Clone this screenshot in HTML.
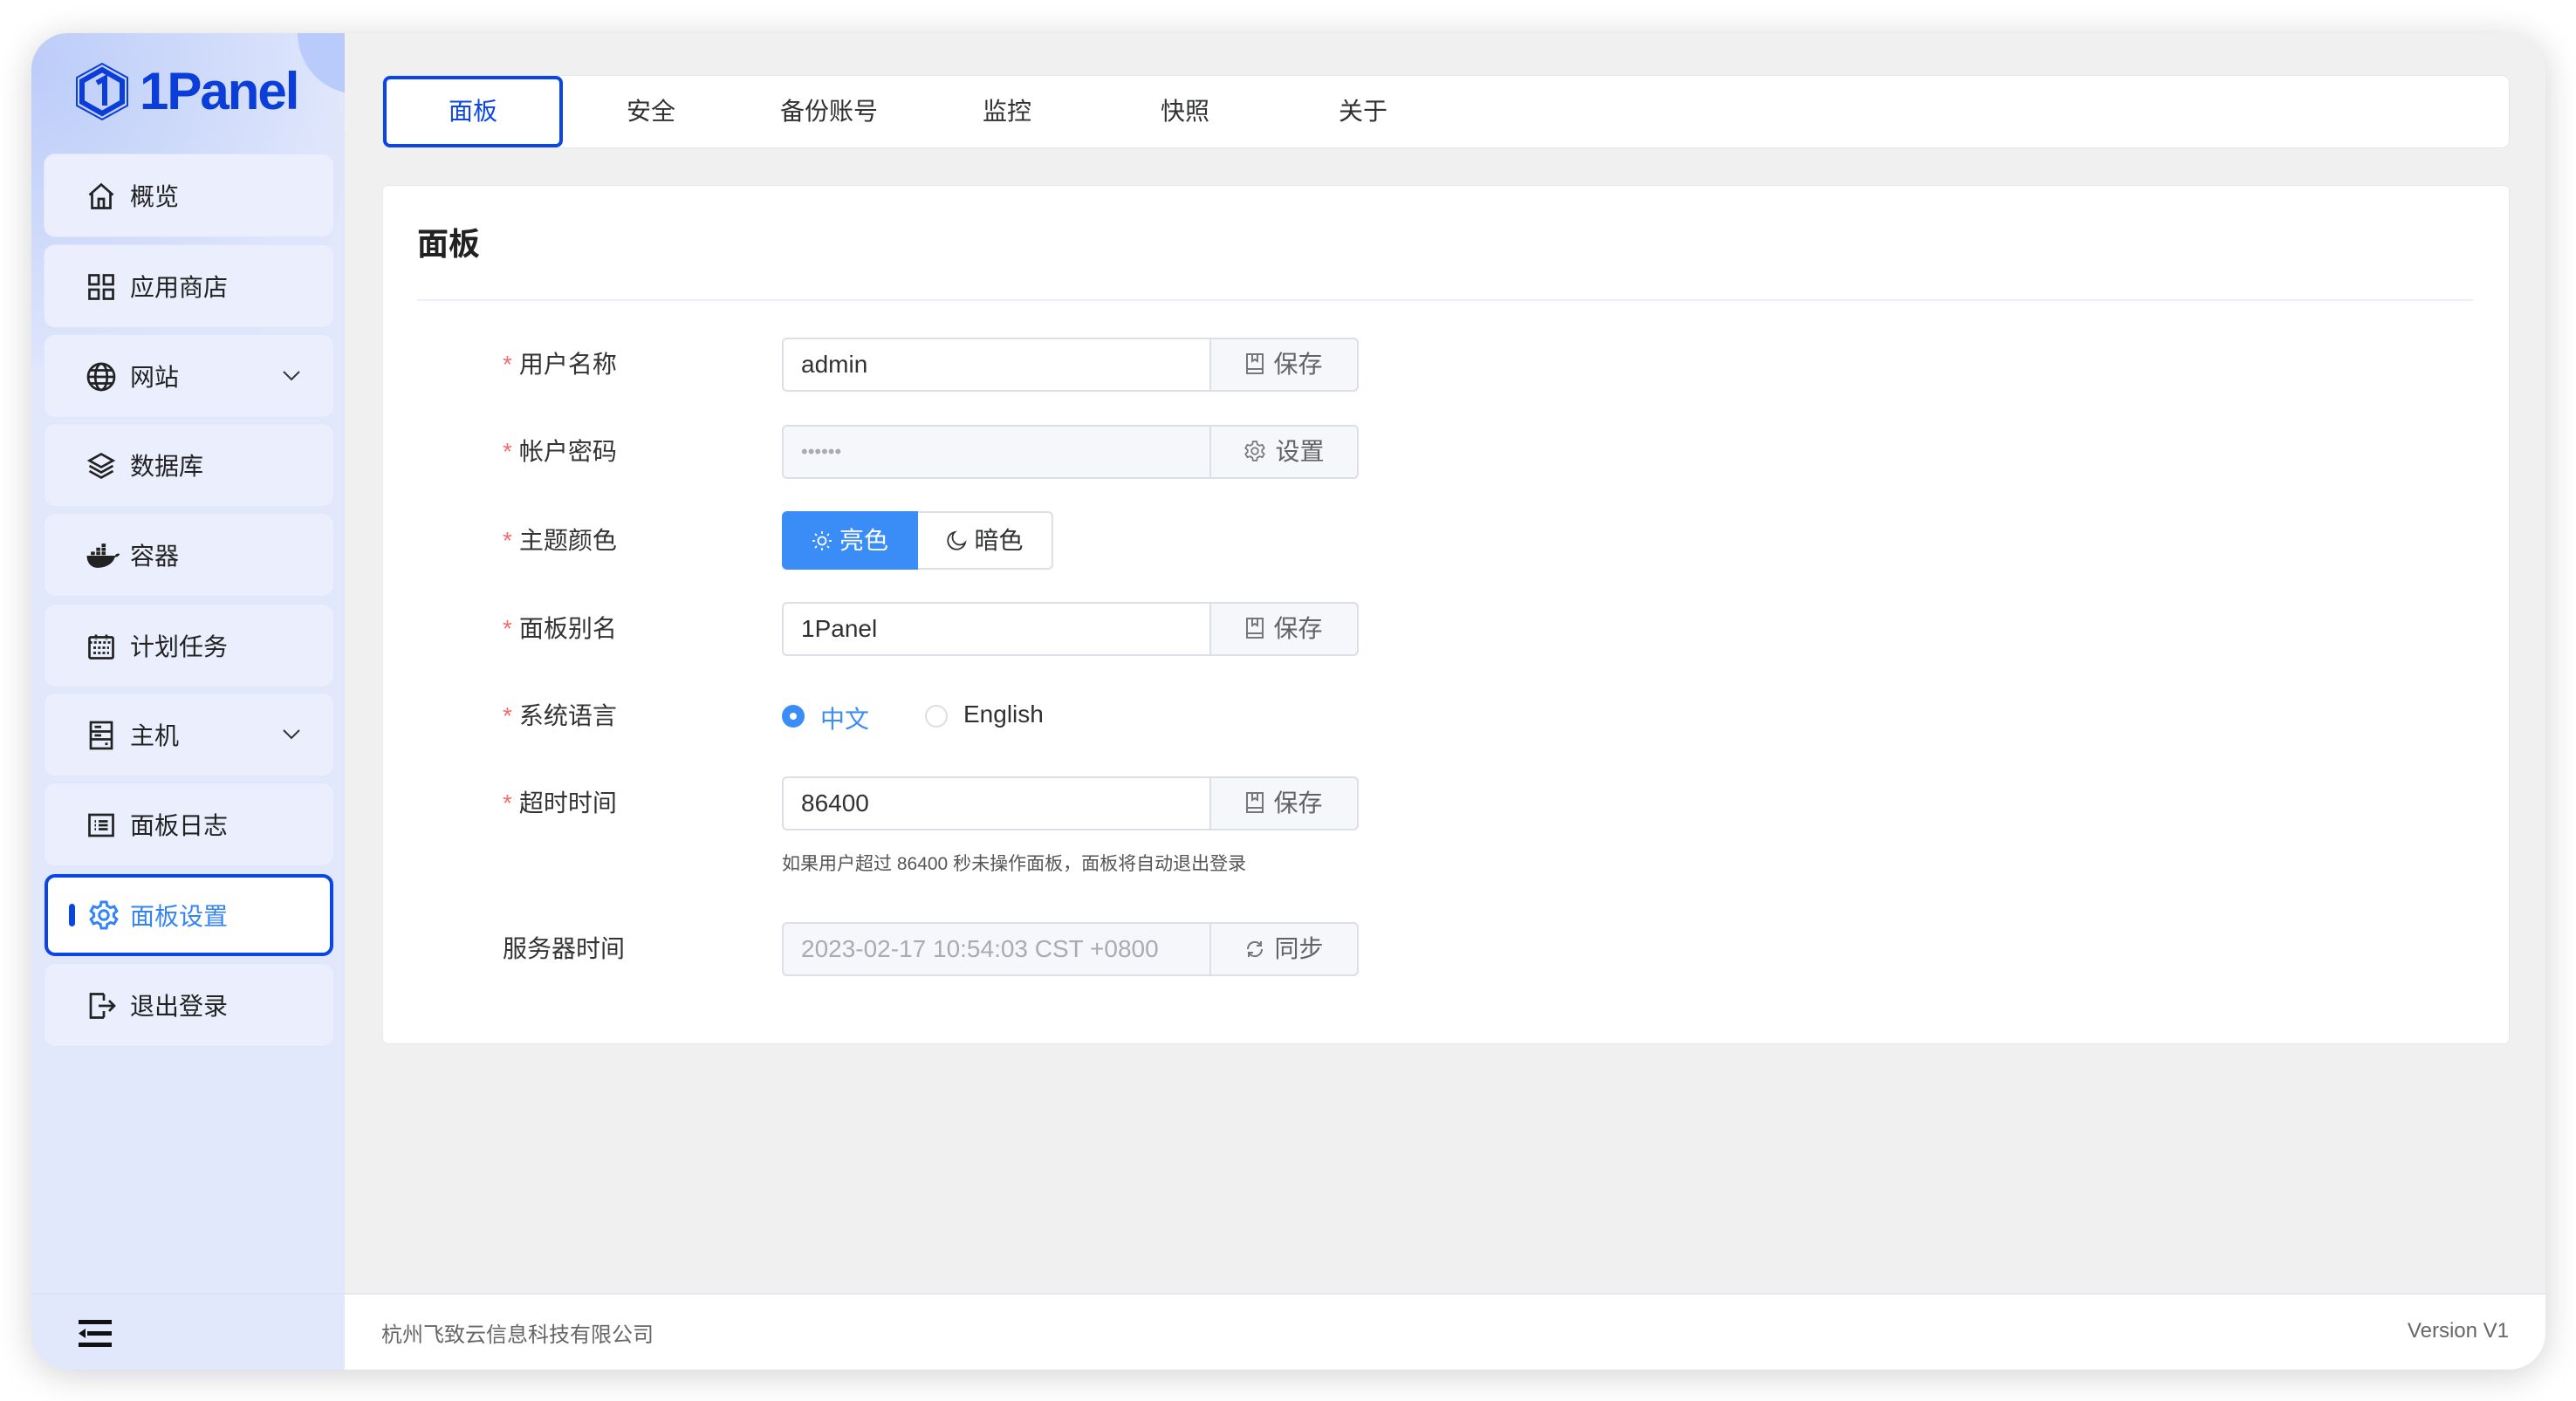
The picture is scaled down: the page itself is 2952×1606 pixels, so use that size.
<!DOCTYPE html>
<html><head><meta charset="utf-8"><style>
*{box-sizing:border-box;margin:0;padding:0}
body{width:2952px;height:1606px;background:#fff;font-family:"Liberation Sans","Noto Sans CJK SC",sans-serif;position:relative;overflow:hidden;color:#303133}
.frame{position:absolute;left:36px;top:38px;width:2881px;height:1532px;border-radius:42px;overflow:hidden;background:#f0f0f0;box-shadow:0 6px 40px rgba(0,0,0,.18)}
.side{position:absolute;left:0;top:0;width:359px;height:1532px;background:#e1e8fc;overflow:hidden}
.blob1{position:absolute;left:-160px;top:-120px;width:520px;height:520px;border-radius:50%;background:radial-gradient(circle at 30% 30%,#b7c9f8,#dfe6fc 70%);opacity:.9}
.blob2{position:absolute;left:305px;top:-70px;width:140px;height:140px;border-radius:50%;background:#b9cbfa}
.abs{position:absolute;white-space:nowrap}
.item{position:absolute;left:15px;width:331px;height:94px;background:#ebeffd;border-radius:12px;box-shadow:0 0 0 1px #dfe6fb;font-size:28px;color:#222;display:flex;align-items:center;white-space:nowrap}
.item svg{position:absolute;left:47px;top:30px}
.item span{position:absolute;left:98px}
.item .chev{position:absolute;left:272px;top:40px}
.item.act{background:#fff;border:4px solid #0a46e4;color:#3584f5}
.tabs{position:absolute;left:403px;top:49px;width:2436px;height:82px;background:#fff;border-radius:8px;box-shadow:0 0 0 1px #e4e7ed}
.tab{position:absolute;top:0;width:206px;height:82px;line-height:82px;text-align:center;font-size:28px;color:#303133}
.tab.act{border:4px solid #0a46e4;border-radius:8px;color:#0a46e4;line-height:74px}
.card{position:absolute;left:403px;top:175px;width:2436px;height:983px;background:#fff;border-radius:6px;box-shadow:0 0 0 1px #e8e8ec}
.lbl{position:absolute;left:540px;font-size:28px;color:#333;height:62px;line-height:62px;white-space:nowrap}
.lbl b{color:#f56c6c;font-weight:normal;margin-right:8px}
.inp{position:absolute;left:860px;width:661px;height:62px;border:2px solid #dcdfe6;border-radius:6px;background:#fff;font-size:28px;line-height:58px;padding-left:20px;color:#303133;white-space:nowrap}
.inp.dis{background:#f5f7fa;color:#a8abb2}
.app{position:absolute;right:-2px;top:-2px;width:171px;height:62px;border:2px solid #dcdfe6;border-radius:0 6px 6px 0;background:#f5f7fa;color:#606266;font-size:28px;line-height:58px;text-align:center}
.app svg{vertical-align:-3px;margin-right:10px}
.foot{position:absolute;left:359px;top:1444px;width:2522px;height:88px;background:#fff;border-top:2px solid #e4e7ed;font-size:24px;color:#666}
</style></head><body>
<div class="frame">
 <div class="side">
  <div class="blob1"></div><div class="blob2"></div>
  <svg class="abs" style="left:48px;top:33px" width="66" height="68" viewBox="0 0 66 68"><polygon points="33,2 62,18 62,50 33,66 4,50 4,18" fill="none" stroke="#0b3ed8" stroke-width="2"/><polygon points="33,9 56,22 56,46 33,59 10,46 10,22" fill="none" stroke="#0b3ed8" stroke-width="6"/><path d="M27 24 L36 19 L36 50" fill="none" stroke="#0b3ed8" stroke-width="6"/></svg>
  <div class="abs" style="left:124px;top:32px;font-size:60px;font-weight:bold;color:#0b3ed8;letter-spacing:-2px">1Panel</div>
  <div class="item" style="top:139px"><svg width="36" height="36" viewBox="0 0 24 24" fill="none" stroke="#222" stroke-width="1.8"><path d="M3 11 L12 3 L21 11 M5 9 V21 H19 V9 M10 21 V14 H14 V21"/></svg><span>概览</span></div>
  <div class="item" style="top:243px"><svg width="36" height="36" viewBox="0 0 24 24" fill="none" stroke="#222" stroke-width="1.8"><rect x="3" y="3" width="7" height="7"/><rect x="14" y="3" width="7" height="7"/><rect x="3" y="14" width="7" height="7"/><rect x="14" y="14" width="7" height="7"/></svg><span>应用商店</span></div>
  <div class="item" style="top:346px"><svg width="36" height="36" viewBox="0 0 24 24" fill="none" stroke="#222" stroke-width="1.8"><circle cx="12" cy="12" r="10"/><ellipse cx="12" cy="12" rx="4.5" ry="10"/><path d="M2 12H22M4 7H20M4 17H20"/></svg><span>网站</span><svg class="chev" width="22" height="14" viewBox="0 0 22 14" fill="none" stroke="#333" stroke-width="2"><path d="M2 2 L11 11 L20 2"/></svg></div>
  <div class="item" style="top:448px"><svg width="36" height="36" viewBox="0 0 24 24" fill="none" stroke="#222" stroke-width="1.8"><path d="M12 3 L21 8 L12 13 L3 8 Z M3 12 L12 17 L21 12 M3 16 L12 21 L21 16"/></svg><span>数据库</span></div>
  <div class="item" style="top:551px"><svg width="40" height="36" viewBox="0 0 26 22" fill="#222"><path d="M1 11 H22 C23 9 25 9 25.5 10 C24 12 23 12 22 12 C20 18 14 20 9 20 C4 20 1 16 1 11Z"/><rect x="4" y="8" width="3" height="2.5"/><rect x="8" y="8" width="3" height="2.5"/><rect x="12" y="8" width="3" height="2.5"/><rect x="8" y="5" width="3" height="2.5"/><rect x="12" y="5" width="3" height="2.5"/><rect x="12" y="2" width="3" height="2.5"/></svg><span>容器</span></div>
  <div class="item" style="top:655px"><svg width="36" height="36" viewBox="0 0 24 24" fill="none" stroke="#222" stroke-width="1.8"><rect x="3" y="5" width="18" height="16" rx="1"/><path d="M3 9H21M8 3V7M16 3V7M6 13H18M6 17H18" stroke-dasharray="2 1.5"/></svg><span>计划任务</span></div>
  <div class="item" style="top:757px"><svg width="36" height="36" viewBox="0 0 24 24" fill="none" stroke="#222" stroke-width="1.8"><rect x="4" y="2" width="16" height="20"/><path d="M4 9H20M4 15H20M7 5.5H12M7 12H12M15 18.5H17"/></svg><span>主机</span><svg class="chev" width="22" height="14" viewBox="0 0 22 14" fill="none" stroke="#333" stroke-width="2"><path d="M2 2 L11 11 L20 2"/></svg></div>
  <div class="item" style="top:860px"><svg width="36" height="36" viewBox="0 0 24 24" fill="none" stroke="#222" stroke-width="1.8"><rect x="3" y="4" width="18" height="16"/><path d="M7 9H8M10 9H17M7 12H8M10 12H17M7 15H8M10 15H17"/></svg><span>面板日志</span></div>
  <div class="item act" style="top:964px"><div class="abs" style="left:24px;top:30px;width:7px;height:26px;border-radius:4px;background:#0a46e4"></div><svg width="36" height="36" viewBox="0 0 24 24" fill="none" stroke="#3584f5" stroke-width="2" style="left:46px;top:25px"><circle cx="12" cy="12" r="3.5"/><path d="M10 2H14L14.6 5A7.5 7.5 0 0 1 17 6.4L19.9 5.4 21.9 8.9 19.6 10.9A7.5 7.5 0 0 1 19.6 13.1L21.9 15.1 19.9 18.6 17 17.6A7.5 7.5 0 0 1 14.6 19L14 22H10L9.4 19A7.5 7.5 0 0 1 7 17.6L4.1 18.6 2.1 15.1 4.4 13.1A7.5 7.5 0 0 1 4.4 10.9L2.1 8.9 4.1 5.4 7 6.4A7.5 7.5 0 0 1 9.4 5Z"/></svg><span style="left:94px">面板设置</span></div>
  <div class="item" style="top:1067px"><svg width="36" height="36" viewBox="0 0 24 24" fill="none" stroke="#222" stroke-width="1.8"><path d="M14 3H4V21H14M14 8V3M14 16V21M10 12H22M18 8L22 12 18 16"/></svg><span>退出登录</span></div>
  <div class="abs" style="left:0;top:1444px;width:359px;height:2px;background:#dce3f3"></div>
  <svg class="abs" style="left:52px;top:1475px" width="40" height="32" viewBox="0 0 40 32" fill="#111"><rect x="2" y="0" width="38" height="5"/><rect x="12" y="13" width="28" height="5"/><polygon points="2,15.5 10,10 10,21"/><rect x="2" y="26" width="38" height="5"/></svg>
 </div>
 <div class="tabs">
  <div class="tab act" style="left:0">面板</div>
  <div class="tab" style="left:204px">安全</div>
  <div class="tab" style="left:408px">备份账号</div>
  <div class="tab" style="left:612px">监控</div>
  <div class="tab" style="left:816px">快照</div>
  <div class="tab" style="left:1020px">关于</div>
 </div>
 <div class="card">
  <div class="abs" style="left:39px;top:38px;font-size:36px;font-weight:bold;color:#222">面板</div>
  <div class="abs" style="left:39px;top:130px;width:2356px;height:2px;background:#ebeef5"></div>
 </div>
 <div class="lbl" style="top:349px"><b>*</b>用户名称</div>
 <div class="inp" style="top:349px">admin<div class="app"><svg width="22" height="26" viewBox="0 0 22 26" fill="none" stroke="#777" stroke-width="2"><rect x="2" y="2" width="18" height="22"/><path d="M2 19H20M8 2V10L11 8 14 10V2"/></svg>保存</div></div>
 <div class="lbl" style="top:449px"><b>*</b>帐户密码</div>
 <div class="inp dis" style="top:449px;font-size:22px">••••••<div class="app" style="font-size:28px"><svg width="26" height="26" viewBox="0 0 24 24" fill="none" stroke="#777" stroke-width="1.6"><circle cx="12" cy="12" r="3.5"/><path d="M10 2H14L14.6 5A7.5 7.5 0 0 1 17 6.4L19.9 5.4 21.9 8.9 19.6 10.9A7.5 7.5 0 0 1 19.6 13.1L21.9 15.1 19.9 18.6 17 17.6A7.5 7.5 0 0 1 14.6 19L14 22H10L9.4 19A7.5 7.5 0 0 1 7 17.6L4.1 18.6 2.1 15.1 4.4 13.1A7.5 7.5 0 0 1 4.4 10.9L2.1 8.9 4.1 5.4 7 6.4A7.5 7.5 0 0 1 9.4 5Z"/></svg>设置</div></div>
 <div class="lbl" style="top:551px"><b>*</b>主题颜色</div>
 <div class="abs" style="left:860px;top:548px;width:156px;height:67px;background:#3a8cf7;border-radius:6px 0 0 6px;color:#fff;font-size:28px;line-height:67px;text-align:center"><svg width="24" height="24" viewBox="0 0 24 24" fill="none" stroke="#fff" stroke-width="1.8" style="vertical-align:-3px;margin-right:8px"><circle cx="12" cy="12" r="4.5"/><path d="M12 1V4M12 20V23M1 12H4M20 12H23M4 4L6 6M18 18L20 20M4 20L6 18M18 6L20 4"/></svg>亮色</div>
 <div class="abs" style="left:1016px;top:548px;width:155px;height:67px;border:2px solid #dcdfe6;border-left:none;border-radius:0 6px 6px 0;color:#303133;font-size:28px;line-height:63px;text-align:center;background:#fff"><svg width="24" height="24" viewBox="0 0 24 24" fill="none" stroke="#333" stroke-width="1.8" style="vertical-align:-3px;margin-right:8px"><path d="M10 2A10 10 0 1 0 22 14 8 8 0 0 1 10 2Z"/></svg>暗色</div>
 <div class="lbl" style="top:652px"><b>*</b>面板别名</div>
 <div class="inp" style="top:652px">1Panel<div class="app"><svg width="22" height="26" viewBox="0 0 22 26" fill="none" stroke="#777" stroke-width="2"><rect x="2" y="2" width="18" height="22"/><path d="M2 19H20M8 2V10L11 8 14 10V2"/></svg>保存</div></div>
 <div class="lbl" style="top:752px"><b>*</b>系统语言</div>
 <div class="abs" style="left:860px;top:770px;width:26px;height:26px;border-radius:50%;background:#3a8cf7"><div class="abs" style="left:9px;top:9px;width:8px;height:8px;border-radius:50%;background:#fff"></div></div>
 <div class="abs" style="left:904px;top:765px;font-size:28px;color:#3a8cf7">中文</div>
 <div class="abs" style="left:1024px;top:770px;width:26px;height:26px;border-radius:50%;border:2px solid #dcdfe6;background:#fff"></div>
 <div class="abs" style="left:1068px;top:765px;font-size:28px;color:#303133">English</div>
 <div class="lbl" style="top:852px"><b>*</b>超时时间</div>
 <div class="inp" style="top:852px">86400<div class="app"><svg width="22" height="26" viewBox="0 0 22 26" fill="none" stroke="#777" stroke-width="2"><rect x="2" y="2" width="18" height="22"/><path d="M2 19H20M8 2V10L11 8 14 10V2"/></svg>保存</div></div>
 <div class="abs" style="left:860px;top:936px;font-size:21px;color:#555">如果用户超过 86400 秒未操作面板，面板将自动退出登录</div>
 <div class="lbl" style="top:1019px">服务器时间</div>
 <div class="inp dis" style="top:1019px">2023-02-17 10:54:03 CST +0800<div class="app"><svg width="24" height="24" viewBox="0 0 24 24" fill="none" stroke="#777" stroke-width="2"><path d="M20 12A8 8 0 0 1 5 16M4 12A8 8 0 0 1 19 8M19 3V8H14M5 21V16H10"/></svg>同步</div></div>
 <div class="foot"><span class="abs" style="left:42px;top:26px">杭州飞致云信息科技有限公司</span><span class="abs" style="right:42px;top:28px">Version V1</span></div>
</div>
</body></html>
